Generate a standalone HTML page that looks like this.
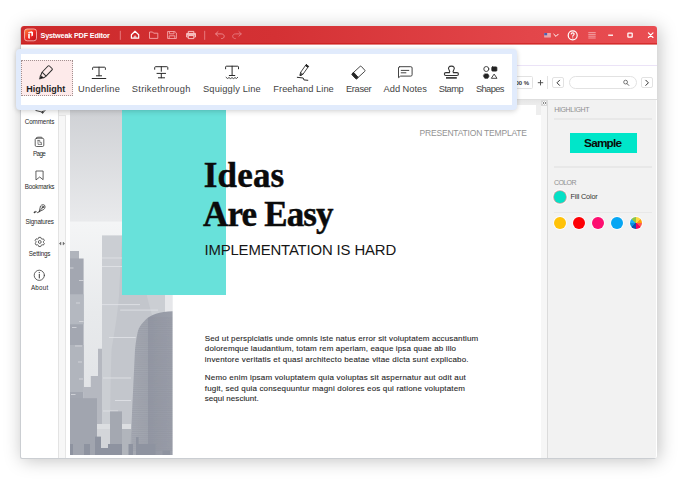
<!DOCTYPE html>
<html lang="en">
<head>
<meta charset="utf-8">
<title>Systweak PDF Editor</title>
<style>
html,body{margin:0;padding:0;background:#fff;}
body{width:678px;height:484px;position:relative;overflow:hidden;font-family:"Liberation Sans",sans-serif;}
.abs,.t,svg.ic{position:absolute;}
.t{white-space:nowrap;display:block;}
#win{left:21px;top:26px;width:636px;height:432px;background:#fff;border-radius:3px 3px 2px 2px;
  box-shadow:-1px 1px 0 0 #cbced2,1.5px 2px 18px rgba(0,0,0,.25);}
#titlebar{left:21px;top:26px;width:636px;height:18.2px;border-radius:3px 3px 0 0;
  background:linear-gradient(90deg,#cc2a2b 0%,#d43134 40%,#e3464a 80%,#e94d52 100%);box-shadow:0 1px 0 rgba(206,30,26,.55),inset 0 -1px 0 rgba(200,20,16,.55);}
#menuline{left:21px;top:64.8px;width:636px;height:1px;background:#ebe3f7;}
#toolline{left:21px;top:99px;width:636px;height:1px;background:#dedede;}
#sidebar{left:21px;top:100px;width:36.5px;height:358px;background:#fff;border-right:1px solid #e3e3e3;border-radius:0 0 0 2px;}
#strip1{left:58.5px;top:100px;width:11.5px;height:15px;background:#f3f3f3;}
#strip1in{left:58.5px;top:115px;width:7.3px;height:343px;background:#f7f7f7;border:1px solid #e6e6e6;border-bottom:0;border-left:0;box-sizing:border-box;}
#docbg{left:70px;top:100px;width:471px;height:6px;background:linear-gradient(#e6e6e6,#eeeeee);}
#page{left:70px;top:105px;width:471px;height:353px;background:#fff;}
#vscroll{left:535.5px;top:105px;width:5.5px;height:353px;background:#fff;}
#vthumb{left:535.5px;top:105px;width:5.5px;height:9.5px;background:#eeeeee;}
#strip2{left:541px;top:100px;width:6.5px;height:358px;background:#f6f6f6;}
#rpanel{left:547.2px;top:100px;width:108.8px;height:358px;background:#f2f2f2;border-left:1.4px solid #dbdbdb;box-sizing:border-box;border-radius:0 0 2px 0;}
.hr{height:1.2px;background:#e8e8e8;left:554px;width:97.5px;}
#sample{left:569.6px;top:133.4px;width:67.2px;height:19.2px;background:#00e6c9;}
.dot{width:11.8px;height:11.8px;border-radius:50%;box-shadow:0 0 0 0.9px rgba(255,255,255,.75);}
#teal{left:122px;top:105px;width:104px;height:190px;background:#68e1da;}
#panel{left:16px;top:48.6px;width:501.4px;height:61.8px;box-sizing:border-box;background:#fff;border:5px solid #e1ebfc;border-radius:4px;box-shadow:0 0 5px rgba(0,0,0,.13),0 3px 6px -1px rgba(0,0,0,.09);}
#hl{left:21px;top:60px;width:52px;height:36px;box-sizing:border-box;background:#fdeaea;border:1px dotted #a39090;}
.btn{box-sizing:border-box;border:1px solid #e2e2e2;background:#fff;}
</style>
</head>
<body>
<!-- application window -->
<div id="win" class="abs"></div>
<div id="titlebar" class="abs"></div>
<div id="menuline" class="abs"></div>
<div id="toolline" class="abs"></div>

<!-- main areas -->
<div id="sidebar" class="abs"></div>
<div id="strip1" class="abs"></div>
<div id="strip1in" class="abs"></div>
<div id="docbg" class="abs"></div>
<div id="page" class="abs"></div>
<svg class="ic" style="left:70px;top:100px" width="102.5" height="355" viewBox="70 100 102.5 355">
<defs>
<linearGradient id="sky" x1="0" y1="0" x2="0" y2="1">
<stop offset="0" stop-color="#cdcfd3"/><stop offset="0.34" stop-color="#e9eaec"/><stop offset="0.345" stop-color="#f4f5f6"/><stop offset="0.6" stop-color="#e8eaec"/><stop offset="1" stop-color="#dcdee2"/>
</linearGradient>
<linearGradient id="twr" x1="0" y1="0" x2="1" y2="0">
<stop offset="0" stop-color="#a6aab3"/><stop offset="0.42" stop-color="#9fa3ad"/><stop offset="0.43" stop-color="#9397a3"/><stop offset="1" stop-color="#9a9ea9"/>
</linearGradient>
<clipPath id="twc"><path d="M172.5 311.2 C160 311.5 150 315 145.6 319.8 C141 324.5 138.8 327.2 137.5 333 C136 340 135.5 345 135 350 L130 455 L172.5 455 Z"/></clipPath>
</defs>
<rect x="70" y="100" width="102.5" height="355" fill="url(#sky)"/>
<!-- light mid building -->
<rect x="102" y="235.4" width="63" height="220" fill="#cbced3"/>
<rect x="165" y="235.4" width="7.5" height="220" fill="#e6e7ea"/>
<!-- tapered light tower -->
<path d="M122 235 C121 260 119.5 280 119 296 C117 320 113 340 111.5 350 C110.5 380 110 420 110 455 L150 455 L152 315 C150 308 148 300 147 296 C145 275 143 255 142 235 Z" fill="#c3c6cc"/>
<!-- thin highlight lines -->
<g stroke="#e2e4e8" stroke-width="0.8">
<line x1="102" y1="258" x2="122" y2="258"/><line x1="102" y1="266.5" x2="122" y2="266.5"/>
<line x1="102" y1="304.6" x2="140" y2="304.6"/><line x1="120.2" y1="310.1" x2="158" y2="310.1"/>
<line x1="109" y1="337.5" x2="135.7" y2="337.5"/><line x1="103" y1="378" x2="131" y2="378"/>
<line x1="115" y1="400.5" x2="131" y2="400.5"/><line x1="103" y1="411" x2="118" y2="411"/>
</g>
<!-- left dark building -->
<path d="M70 251 H79 V258.4 H83.6 V455 H70 Z" fill="#a3a7b1"/>
<rect x="70" y="251" width="9" height="7.4" fill="#b0b4bc"/>
<rect x="70" y="294.3" width="13.6" height="30" fill="#b4b8c0"/>
<rect x="70" y="345" width="13.6" height="47" fill="#b1b5bd"/>
<g stroke="#d9dbdf" stroke-width="0.8"><line x1="70" y1="268" x2="73.5" y2="268"/><line x1="79" y1="280.5" x2="83.6" y2="280.5"/><line x1="76" y1="303" x2="80" y2="303"/><line x1="79" y1="321.5" x2="83.6" y2="321.5"/><line x1="72" y1="327.5" x2="76.5" y2="327.5"/><line x1="75" y1="346" x2="82" y2="346"/><line x1="78" y1="362" x2="82" y2="362"/><line x1="79" y1="379" x2="83" y2="379"/><line x1="71" y1="394.5" x2="75.5" y2="394.5"/></g>
<!-- gap -->
<rect x="83.6" y="235" width="18.4" height="220" fill="#e2e4e7" opacity=".0"/>
<!-- medium buildings -->
<path d="M83.6 387 H90.8 V376 H98 V348.7 H102 V455 H83.6 Z" fill="#b5b8c0"/>
<rect x="70" y="398.2" width="27" height="57" fill="#a1a5af"/>
<!-- pale band -->
<rect x="97" y="424" width="34" height="5" fill="#dcdee1"/>
<rect x="97" y="429" width="13" height="20" fill="#d3d5d9"/>
<!-- small buildings -->
<rect x="110" y="411.4" width="12" height="44" fill="#a4a8b1"/>
<rect x="122" y="429" width="9" height="26" fill="#b1b5bc"/>
<!-- dark rounded tower -->
<path d="M172.5 311.2 C160 311.5 150 315 145.6 319.8 C141 324.5 138.8 327.2 137.5 333 C136 340 135.5 345 135 350 L130 455 L172.5 455 Z" fill="url(#twr)"/>
<!-- floor lines on tower -->
<g stroke="#8b8f9b" stroke-width="0.35" opacity=".7" clip-path="url(#twc)">
<line x1="132" y1="318.0" x2="172.5" y2="318.0"/>
<line x1="132" y1="320.1" x2="172.5" y2="320.1"/>
<line x1="132" y1="322.2" x2="172.5" y2="322.2"/>
<line x1="132" y1="324.3" x2="172.5" y2="324.3"/>
<line x1="132" y1="326.4" x2="172.5" y2="326.4"/>
<line x1="132" y1="328.5" x2="172.5" y2="328.5"/>
<line x1="132" y1="330.6" x2="172.5" y2="330.6"/>
<line x1="132" y1="332.7" x2="172.5" y2="332.7"/>
<line x1="132" y1="334.8" x2="172.5" y2="334.8"/>
<line x1="132" y1="336.9" x2="172.5" y2="336.9"/>
<line x1="132" y1="339.0" x2="172.5" y2="339.0"/>
<line x1="132" y1="341.1" x2="172.5" y2="341.1"/>
<line x1="132" y1="343.2" x2="172.5" y2="343.2"/>
<line x1="132" y1="345.3" x2="172.5" y2="345.3"/>
<line x1="132" y1="347.4" x2="172.5" y2="347.4"/>
<line x1="132" y1="349.5" x2="172.5" y2="349.5"/>
<line x1="132" y1="351.6" x2="172.5" y2="351.6"/>
<line x1="132" y1="353.7" x2="172.5" y2="353.7"/>
<line x1="132" y1="355.8" x2="172.5" y2="355.8"/>
<line x1="132" y1="357.9" x2="172.5" y2="357.9"/>
<line x1="132" y1="360.0" x2="172.5" y2="360.0"/>
<line x1="132" y1="362.1" x2="172.5" y2="362.1"/>
<line x1="132" y1="364.2" x2="172.5" y2="364.2"/>
<line x1="132" y1="366.3" x2="172.5" y2="366.3"/>
<line x1="132" y1="368.4" x2="172.5" y2="368.4"/>
<line x1="132" y1="370.5" x2="172.5" y2="370.5"/>
<line x1="132" y1="372.6" x2="172.5" y2="372.6"/>
<line x1="132" y1="374.7" x2="172.5" y2="374.7"/>
<line x1="132" y1="376.8" x2="172.5" y2="376.8"/>
<line x1="132" y1="378.9" x2="172.5" y2="378.9"/>
<line x1="132" y1="381.0" x2="172.5" y2="381.0"/>
<line x1="132" y1="383.1" x2="172.5" y2="383.1"/>
<line x1="132" y1="385.2" x2="172.5" y2="385.2"/>
<line x1="132" y1="387.3" x2="172.5" y2="387.3"/>
<line x1="132" y1="389.4" x2="172.5" y2="389.4"/>
<line x1="132" y1="391.5" x2="172.5" y2="391.5"/>
<line x1="132" y1="393.6" x2="172.5" y2="393.6"/>
<line x1="132" y1="395.7" x2="172.5" y2="395.7"/>
<line x1="132" y1="397.8" x2="172.5" y2="397.8"/>
<line x1="132" y1="399.9" x2="172.5" y2="399.9"/>
<line x1="132" y1="402.0" x2="172.5" y2="402.0"/>
<line x1="132" y1="404.1" x2="172.5" y2="404.1"/>
<line x1="132" y1="406.2" x2="172.5" y2="406.2"/>
<line x1="132" y1="408.3" x2="172.5" y2="408.3"/>
<line x1="132" y1="410.4" x2="172.5" y2="410.4"/>
<line x1="132" y1="412.5" x2="172.5" y2="412.5"/>
<line x1="132" y1="414.6" x2="172.5" y2="414.6"/>
<line x1="132" y1="416.7" x2="172.5" y2="416.7"/>
<line x1="132" y1="418.8" x2="172.5" y2="418.8"/>
<line x1="132" y1="420.9" x2="172.5" y2="420.9"/>
<line x1="132" y1="423.0" x2="172.5" y2="423.0"/>
<line x1="132" y1="425.1" x2="172.5" y2="425.1"/>
<line x1="132" y1="427.2" x2="172.5" y2="427.2"/>
<line x1="132" y1="429.3" x2="172.5" y2="429.3"/>
<line x1="132" y1="431.4" x2="172.5" y2="431.4"/>
<line x1="132" y1="433.5" x2="172.5" y2="433.5"/>
<line x1="132" y1="435.6" x2="172.5" y2="435.6"/>
<line x1="132" y1="437.7" x2="172.5" y2="437.7"/>
<line x1="132" y1="439.8" x2="172.5" y2="439.8"/>
<line x1="132" y1="441.9" x2="172.5" y2="441.9"/>
<line x1="132" y1="444.0" x2="172.5" y2="444.0"/>
<line x1="132" y1="446.1" x2="172.5" y2="446.1"/>
<line x1="132" y1="448.2" x2="172.5" y2="448.2"/>
<line x1="132" y1="450.3" x2="172.5" y2="450.3"/>
</g>
<!-- re-mask tower lines outside tower: light building edge -->
<!-- bottom skyline -->
<g fill="#8e93a0">
<rect x="70" y="444" width="3" height="11"/><rect x="84" y="444" width="6" height="11"/><rect x="95" y="436.6" width="6" height="18.4"/>
<rect x="101" y="448" width="7" height="7"/><rect x="108" y="444" width="14" height="11"/><rect x="128.5" y="444" width="4.5" height="11"/>
<rect x="136" y="437" width="2.6" height="18"/><rect x="138" y="444" width="17.5" height="11"/><rect x="162.5" y="450.5" width="7.5" height="4.5"/>
</g>
</svg>

<div id="teal" class="abs"></div>
<div id="vscroll" class="abs"></div>
<div id="vthumb" class="abs"></div>
<div id="strip2" class="abs"></div>
<div id="rpanel" class="abs"></div>

<!-- right properties panel -->
<div class="abs hr" style="top:118.4px"></div>
<div id="sample" class="abs"></div>
<div class="abs hr" style="top:166.4px"></div>
<div class="abs dot" style="left:554px;top:190.8px;background:#06e0c6;box-shadow:0 0 0 0.8px #c9a3a0,0 0 0 1.8px rgba(255,255,255,.8);"></div>
<div class="abs hr" style="top:212px"></div>
<div class="abs dot" style="left:554px;top:217px;background:#ffc208;"></div>
<div class="abs dot" style="left:573.1px;top:217px;background:#fd0005;"></div>
<div class="abs dot" style="left:592.2px;top:217px;background:#fd0f70;"></div>
<div class="abs dot" style="left:611.2px;top:217px;background:#07a6f3;"></div>
<div class="abs dot" style="left:630.1px;top:217px;background:conic-gradient(#ffd840 0 45deg,#ffa306 45deg 90deg,#ff5a4e 90deg 135deg,#f5065c 135deg 180deg,#0f4fb0 180deg 225deg,#0690e0 225deg 270deg,#19b2f5 270deg 315deg,#8cc548 315deg 360deg);"></div>

<!-- toolbar (right part) -->
<div class="abs btn" style="left:500px;top:76px;width:32.6px;height:13px;border-radius:1.5px;"></div>
<div class="abs" style="left:547.3px;top:76px;width:1px;height:13px;background:#e2e2e2;"></div>
<div class="abs btn" style="left:552.2px;top:76.7px;width:11.7px;height:11.4px;border-radius:2px;"></div>
<div class="abs btn" style="left:568.6px;top:76px;width:68px;height:13.2px;border-radius:7px;"></div>
<div class="abs btn" style="left:641px;top:76.7px;width:11.7px;height:11.4px;border-radius:2px;"></div>
<div class="abs btn" style="left:541px;top:99.6px;width:6.4px;height:6.6px;border-color:#dadada;"></div>

<svg class="ic" style="left:0;top:0" width="678" height="484" viewBox="0 0 678 484" fill="none">
<defs>
<linearGradient id="lg" x1="0" y1="0" x2="1" y2="1"><stop offset="0" stop-color="#ff8a3c"/><stop offset="0.5" stop-color="#ee2a24"/><stop offset="1" stop-color="#b80f1e"/></linearGradient>
</defs>
<!-- app logo -->
<rect x="24.5" y="29" width="12" height="11.8" rx="2.6" fill="url(#lg)" stroke="#f7c5c2" stroke-width="0.8"/>
<path d="M28.2 33.9 L29.8 33.3 V38.8 L28.2 38.2 Z M28.3 32 L31.8 31.2 L33 32.3 V35.5 L31.4 36.5 V33.2 L29.8 32.7 L28.3 33.3 Z" fill="#fff"/>
<!-- title separators -->
<line x1="120.3" y1="30.8" x2="120.3" y2="39.8" stroke="#ec8d90" stroke-width="0.8"/>
<line x1="204.7" y1="30.8" x2="204.7" y2="39.8" stroke="#ec8d90" stroke-width="0.8"/>
<!-- home -->
<path d="M131.4 34.7 L135 31.2 L138.7 34.7 V38.2 H131.4 Z" stroke="#fff" stroke-width="1.2" stroke-linejoin="round"/><path d="M134.2 38 V36.4 Q135 35.4 135.9 36.4 V38" stroke="#fff" stroke-width="0.8"/>
<!-- folder -->
<path d="M149.5 32 H152.6 L153.6 33.2 H157.8 V38.4 H149.5 Z" stroke="#f4a5a8" stroke-width="0.9" stroke-linejoin="round"/>
<!-- save -->
<path d="M167.6 31.5 H174.8 L176.4 33 V38.5 H167.6 Z M169.4 31.5 V33.8 H174 V31.5 M169.2 38.5 V35.8 H174.8 V38.5" stroke="#f4a5a8" stroke-width="0.9" stroke-linejoin="round"/>
<!-- print -->
<path d="M188.3 33.4 V31.4 H193.8 V33.4 M188.3 37 H186.6 V33.4 H195.5 V37 H193.8 M188.3 35.6 H193.8 V38.6 H188.3 Z" stroke="#fbd0d1" stroke-width="0.9" stroke-linejoin="round"/>
<rect x="187" y="33.6" width="8.2" height="2" fill="#fbd0d1" opacity=".85"/>
<!-- undo / redo -->
<path d="M218 31.6 L215.6 33.9 L218 36.2 M215.8 33.9 H221.2 C223.2 33.9 224.2 35 224.2 36.3 C224.2 37.6 223.2 38.6 221.6 38.6" stroke="#ee8f93" stroke-width="0.9" stroke-linecap="round" stroke-linejoin="round"/>
<path d="M238.9 31.6 L241.3 33.9 L238.9 36.2 M241.1 33.9 H235.7 C233.7 33.9 232.7 35 232.7 36.3 C232.7 37.6 233.7 38.6 235.3 38.6" stroke="#e77d82" stroke-width="0.9" stroke-linecap="round" stroke-linejoin="round"/>
<!-- flag + chevron -->
<rect x="544.2" y="33" width="6.6" height="4.4" fill="#f3d6d8"/>
<rect x="544.2" y="33" width="3" height="2.4" fill="#4a5fb0"/>
<path d="M544.2 35.9 H550.8 M547.2 33.7 H550.8 M547.2 34.8 H550.8 M544.2 36.9 H550.8" stroke="#e0585e" stroke-width="0.45"/>
<path d="M553.8 34.2 L556 36.4 L558.2 34.2" stroke="#fff" stroke-width="1" stroke-linecap="round" stroke-linejoin="round"/>
<!-- help -->
<circle cx="572.7" cy="35.3" r="4.5" stroke="#fff" stroke-width="1.2"/>
<path d="M571.2 34 C571.2 32.5 574.2 32.5 574.2 34 C574.2 35.1 572.7 35.1 572.7 36.3" stroke="#fff" stroke-width="1.1" stroke-linecap="round"/>
<circle cx="572.8" cy="37.9" r="0.55" fill="#fff"/>
<!-- hamburger -->
<path d="M588.3 32.6 H595.7 M588.3 34.4 H595.7 M588.3 36.2 H595.7 M588.3 38 H595.7" stroke="#f39ea2" stroke-width="1"/>
<!-- min / max / close -->
<path d="M608.2 35.2 H613" stroke="#fff" stroke-width="1.3"/>
<rect x="627.9" y="33" width="4.3" height="4.2" rx="0.5" stroke="#fff" stroke-width="1.25"/>
<path d="M648.4 32.9 L653 37.5 M653 32.9 L648.4 37.5" stroke="#fff" stroke-width="1.15" stroke-linecap="round"/>

<!-- toolbar right -->
<path d="M537.8 82.7 H543.2 M540.5 80 V85.4" stroke="#444" stroke-width="0.9"/>
<path d="M559.6 80.2 L557 82.8 L559.6 85.4" stroke="#333" stroke-width="1" stroke-linecap="round" stroke-linejoin="round"/>
<path d="M645.8 80.2 L648.4 82.8 L645.8 85.4" stroke="#333" stroke-width="1" stroke-linecap="round" stroke-linejoin="round"/>
<circle cx="625.6" cy="82.1" r="1.9" stroke="#555" stroke-width="0.8"/>
<path d="M627 83.6 L628.8 85.4" stroke="#555" stroke-width="0.9" stroke-linecap="round"/>
<path d="M542.5 101.6 L543.9 103 L542.5 104.4 M544.5 101.6 L545.9 103 L544.5 104.4" stroke="#444" stroke-width="0.7"/>
<path d="M61 242.1 L59.3 243.6 L61 245.1 Z M63 242.1 L64.7 243.6 L63 245.1 Z" fill="#777" stroke="#555" stroke-width="0.4"/>

<!-- sidebar icons -->
<g stroke="#3a3a3a" stroke-width="0.8" stroke-linejoin="round" stroke-linecap="round">
<!-- comments (mostly hidden by floating toolbar) -->
<path d="M35 104 H45 V110.4 L42.6 113.4 L41 111.8 L36.2 110.6 Z" stroke-width="0.9"/>
<path d="M41 111.6 L44 110.6 L42.6 113.4 Z" fill="#3a3a3a" stroke="none"/>
<!-- page -->
<path d="M36.6 138.2 H42.4 C43.4 138.2 43.8 138.8 43.8 139.6 V145.2 C43.8 146 43.3 146.5 42.5 146.5 H36.5 C35.6 146.5 35.2 146 35.2 145.2 V139.6 C35.2 138.8 35.7 138.2 36.6 138.2 Z"/>
<path d="M36.8 138.2 C36.8 137.4 37.4 137.2 38 137.2 H41 C41.7 137.2 42.2 137.5 42.2 138.2"/>
<path d="M38 140.4 V144.4 H41.4 M38 140.4 H39.8 V142.4 H41.4 V144.4" stroke-width="0.6"/>
<!-- bookmark -->
<path d="M36.3 171 H43.1 V179.7 L39.7 177 L36.3 179.7 Z"/>
<!-- signature pen -->
<path d="M39.2 211.7 L40.5 206 C41.6 204.6 43.4 204.3 44.5 205.2 C45.4 206.4 45.2 208.2 43.8 209.4 L39.2 211.7 Z M39.2 211.7 L42.6 207.4"/>
<circle cx="42.9" cy="207" r="0.9"/>
<path d="M39.2 211.7 C38 213.2 37 212.8 36.6 211.8 C36.2 211 35.2 211.2 34.6 212.2" />
<circle cx="34.5" cy="212.3" r="0.5" fill="#3a3a3a"/>
<!-- about -->
<circle cx="39.3" cy="275.3" r="5.1"/>
<path d="M39.3 274.4 V278" stroke-width="1"/>
</g>
<circle cx="39.3" cy="272.6" r="0.65" fill="#3a3a3a"/>
<!-- settings gear -->
<g stroke="#3a3a3a" stroke-width="0.95" stroke-linejoin="round" transform="translate(39.75,241.95) scale(0.84) translate(-39.5,-242.05)">
<path d="M38.3 237.5 H40.7 L41.1 238.9 L42.4 239.6 L43.8 239.2 L45 241.2 L44 242.2 V243.7 L45 244.7 L43.8 246.7 L42.4 246.3 L41.1 247 L40.7 248.4 H38.3 L37.9 247 L36.6 246.3 L35.2 246.7 L34 244.7 L35 243.7 V242.2 L34 241.2 L35.2 239.2 L36.6 239.6 L37.9 238.9 Z" transform="translate(0,-0.9)"/>
<circle cx="39.5" cy="242.05" r="1.7"/>
</g>
</svg>


<span class="t" style="left:40.50px;top:32.00px;font:700 7.30px/1 'Liberation Sans', sans-serif;color:#fff;letter-spacing:-0.206px">Systweak PDF Editor</span>
<span class="t" style="left:24.70px;top:119.00px;font:400 6.30px/1 'Liberation Sans', sans-serif;color:#2a2a2a;letter-spacing:-0.108px">Comments</span>
<span class="t" style="left:32.90px;top:151.00px;font:400 6.30px/1 'Liberation Sans', sans-serif;color:#2a2a2a;letter-spacing:-0.606px">Page</span>
<span class="t" style="left:24.70px;top:184.00px;font:400 6.30px/1 'Liberation Sans', sans-serif;color:#2a2a2a;letter-spacing:-0.212px">Bookmarks</span>
<span class="t" style="left:25.50px;top:219.00px;font:400 6.30px/1 'Liberation Sans', sans-serif;color:#2a2a2a;letter-spacing:-0.179px">Signatures</span>
<span class="t" style="left:28.80px;top:251.00px;font:400 6.30px/1 'Liberation Sans', sans-serif;color:#2a2a2a;letter-spacing:-0.152px">Settings</span>
<span class="t" style="left:30.90px;top:285.00px;font:400 6.30px/1 'Liberation Sans', sans-serif;color:#2a2a2a;letter-spacing:0.208px">About</span>
<span class="t" style="left:554.20px;top:106.00px;font:400 7.00px/1 'Liberation Sans', sans-serif;color:#909090;letter-spacing:-0.341px">HIGHLIGHT</span>
<span class="t" style="left:554.00px;top:178.50px;font:400 7.00px/1 'Liberation Sans', sans-serif;color:#909090;letter-spacing:-0.602px">COLOR</span>
<span class="t" style="left:570.50px;top:193.40px;font:400 7.30px/1 'Liberation Sans', sans-serif;color:#333;letter-spacing:-0.166px">Fill Color</span>
<span class="t" style="left:584.10px;top:138.00px;font:700 11.80px/1 'Liberation Sans', sans-serif;color:#0a0a0a;letter-spacing:-0.814px">Sample</span>
<span class="t" style="left:512.20px;top:80.00px;font:700 6.00px/1 'Liberation Sans', sans-serif;color:#3a3a3a;letter-spacing:-0.004px">100 %</span>
<span class="t" style="left:419.60px;top:129.00px;font:400 8.50px/1 'Liberation Sans', sans-serif;color:#929292;letter-spacing:-0.196px">PRESENTATION TEMPLATE</span>
<span class="t" style="left:203.80px;top:157.50px;font:700 35.00px/1 'Liberation Serif', serif;color:#0b0b0b;letter-spacing:0.162px;-webkit-text-stroke:0.45px #0b0b0b">Ideas</span>
<span class="t" style="left:203.00px;top:196.50px;font:700 35.00px/1 'Liberation Serif', serif;color:#0b0b0b;letter-spacing:-0.834px;-webkit-text-stroke:0.45px #0b0b0b">Are Easy</span>
<span class="t" style="left:204.40px;top:243.20px;font:400 14.90px/1 'Liberation Sans', sans-serif;color:#161616;letter-spacing:-0.138px">IMPLEMENTATION IS HARD</span>
<span class="t" style="left:204.80px;top:334.60px;font:400 8.00px/1 'Liberation Sans', sans-serif;color:#262626;letter-spacing:0.139px;-webkit-text-stroke:0.10px #262626">Sed ut perspiciatis unde omnis iste natus error sit voluptatem accusantium</span>
<span class="t" style="left:204.80px;top:345.20px;font:400 8.00px/1 'Liberation Sans', sans-serif;color:#262626;letter-spacing:0.145px;-webkit-text-stroke:0.10px #262626">doloremque laudantium, totam rem aperiam, eaque ipsa quae ab illo</span>
<span class="t" style="left:204.80px;top:355.60px;font:400 8.00px/1 'Liberation Sans', sans-serif;color:#262626;letter-spacing:0.183px;-webkit-text-stroke:0.10px #262626">inventore veritatis et quasi architecto beatae vitae dicta sunt explicabo.</span>
<span class="t" style="left:204.80px;top:374.20px;font:400 8.00px/1 'Liberation Sans', sans-serif;color:#262626;letter-spacing:0.199px;-webkit-text-stroke:0.10px #262626">Nemo enim ipsam voluptatem quia voluptas sit aspernatur aut odit aut</span>
<span class="t" style="left:204.80px;top:384.60px;font:400 8.00px/1 'Liberation Sans', sans-serif;color:#262626;letter-spacing:0.164px;-webkit-text-stroke:0.10px #262626">fugit, sed quia consequuntur magni dolores eos qui ratione voluptatem</span>
<span class="t" style="left:204.80px;top:394.90px;font:400 8.00px/1 'Liberation Sans', sans-serif;color:#262626;letter-spacing:0.037px;-webkit-text-stroke:0.10px #262626">sequi nesciunt.</span>

<!-- floating annotation toolbar -->
<div id="panel" class="abs"></div>
<div id="hl" class="abs"></div>
<svg class="ic" style="left:0;top:0" width="678" height="484" viewBox="0 0 678 484" fill="none">
<g stroke="#2b2b2b" stroke-width="1" stroke-linejoin="round" stroke-linecap="round">
<!-- highlight marker -->
<g transform="translate(47.4,70.7) rotate(44)">
<rect x="-2.8" y="-4.8" width="5.6" height="9.6" rx="1"/>
<path d="M-2.8 4.8 L-1.4 8.3 M2.8 4.8 L2.3 7.7"/>
<path d="M-1.4 8.3 L2.3 7.6 L0.2 11.3 Z" fill="#111" stroke-width="0.6"/>
</g>
<!-- underline -->
<path d="M92.6 69.4 V68.1 Q92.6 67.2 93.5 67.2 H104.5 Q105.4 67.2 105.4 68.1 V69.4 M99 67.2 V75.8 M96.4 75.8 H101.6 M92.2 78.5 H105.8"/>
<!-- strikethrough -->
<path d="M154.7 69.3 V67.6 Q154.7 66.7 155.6 66.7 H166.9 Q167.8 66.7 167.8 67.6 V69.3 M161.3 66.7 V71.3 M157 73.4 H165.6 M161.3 73.4 V77.8 M158.4 77.8 H164.6"/>
<!-- squiggly -->
<path d="M225.6 68.8 V67.1 Q225.6 66.2 226.5 66.2 H237.6 Q238.5 66.2 238.5 67.1 V68.8 M232.1 66.2 V75.5 M229.3 75.5 H234.8"/>
<path d="M226 77.4 Q227.5 79.6 229 77.6 Q230.5 79.6 232 77.6 Q233.5 79.6 235 77.6 Q236.4 79.6 237.8 77.4" stroke-width="0.85"/>
<!-- freehand pencil -->
<g transform="translate(303.75,70.55) rotate(35.3)" stroke-width="0.8">
<rect x="-1.5" y="-6.3" width="3" height="9.8" rx="0.4"/>
<rect x="-1.5" y="-6.3" width="3" height="1.4" rx="0.3" fill="#222"/>
<path d="M-1.5 3.5 L0 6.3 L1.5 3.5" />
<path d="M-0.7 5 L0 6.3 L0.7 5 Z" fill="#222"/>
</g>
<path d="M297.3 77.3 L303.2 78 L303.9 79.9 L307.8 80.3" stroke-width="1"/>
<!-- eraser -->
<g transform="translate(358.5,72.5) rotate(-42.6)" stroke-width="0.8">
<rect x="-6.2" y="-3.4" width="12.4" height="6.8" rx="0.9"/>
<path d="M-6.2 -2.5 Q-6.2 -3.4 -5.3 -3.4 H-3.5 V3.4 H-5.3 Q-6.2 3.4 -6.2 2.5 Z" fill="#222"/>
</g>
<!-- add notes -->
<path d="M399.6 66.7 H410.8 Q412.1 66.7 412.1 68 V74.8 Q412.1 76.1 410.8 76.1 H400.6 L398.5 77.7 V68 Q398.5 66.7 399.6 66.7 Z" stroke="#444"/>
<path d="M401.2 70.4 H408.8 M401.2 72.8 H405.9" stroke="#444"/>
<!-- stamp -->
<path d="M449.4 72.6 C450.2 71.4 449.7 70.8 449.1 70 C447.6 68 449 66.1 451.4 66.1 C453.8 66.1 455.2 68 453.7 70 C453.1 70.8 452.6 71.4 453.4 72.6 H457 C458.9 72.6 458.9 75.5 457 75.5 H445.8 C443.9 75.5 443.9 72.6 445.8 72.6 Z" stroke="#333" stroke-width="1.1"/>
<path d="M446 77.9 H456.8" stroke-width="1.5" stroke="#222" stroke-linecap="butt"/>
<!-- shapes -->
<circle cx="486.3" cy="69" r="2.5" stroke="#444"/>
<rect x="491.9" y="67" width="4.9" height="4" rx="0.6" fill="#222" stroke="#222"/>
<path d="M484.8 73.9 H487.8 L489.1 76.1 L487.8 78.3 H484.8 L483.5 76.1 Z" fill="#222" stroke="#222" stroke-width="0.7"/>
<path d="M494.35 74.4 L497 78.3 H491.7 Z" stroke="#333" stroke-width="0.9"/>
</g>
</svg>

<span class="t" style="left:26.20px;top:85.00px;font:700 9.00px/1 'Liberation Sans', sans-serif;color:#1e1e1e;letter-spacing:0.012px">Highlight</span>
<span class="t" style="left:78.10px;top:85.00px;font:400 9.30px/1 'Liberation Sans', sans-serif;color:#444;letter-spacing:0.250px">Underline</span>
<span class="t" style="left:131.80px;top:85.00px;font:400 9.30px/1 'Liberation Sans', sans-serif;color:#444;letter-spacing:0.275px">Strikethrough</span>
<span class="t" style="left:203.00px;top:85.00px;font:400 9.30px/1 'Liberation Sans', sans-serif;color:#444;letter-spacing:0.164px">Squiggly Line</span>
<span class="t" style="left:273.30px;top:85.00px;font:400 9.30px/1 'Liberation Sans', sans-serif;color:#444;letter-spacing:0.044px">Freehand Line</span>
<span class="t" style="left:346.00px;top:85.00px;font:400 9.30px/1 'Liberation Sans', sans-serif;color:#444;letter-spacing:-0.358px">Eraser</span>
<span class="t" style="left:383.60px;top:85.00px;font:400 9.30px/1 'Liberation Sans', sans-serif;color:#444;letter-spacing:-0.028px">Add Notes</span>
<span class="t" style="left:438.70px;top:85.00px;font:400 9.30px/1 'Liberation Sans', sans-serif;color:#444;letter-spacing:-0.444px">Stamp</span>
<span class="t" style="left:476.00px;top:85.00px;font:400 9.30px/1 'Liberation Sans', sans-serif;color:#444;letter-spacing:-0.629px">Shapes</span>
</body>
</html>
